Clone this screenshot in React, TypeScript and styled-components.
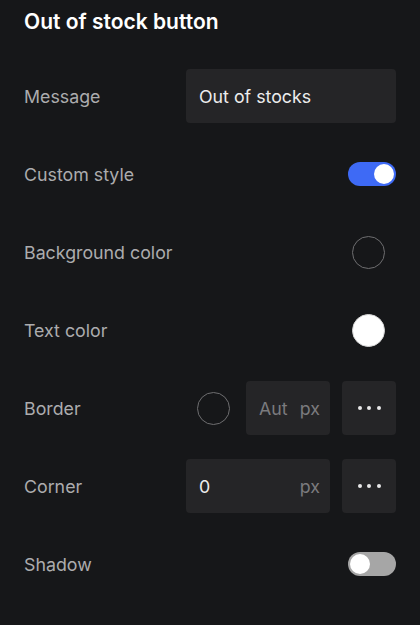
import React from "react";
import styled, { createGlobalStyle } from "styled-components";

const Global = createGlobalStyle`
  html, body { margin: 0; padding: 0; background: #161719; }
  body { font-family: Inter, "Noto Sans", sans-serif; -webkit-font-smoothing: antialiased; }
`;

const Panel = styled.div`
  width: 420px;
  min-height: 625px;
  box-sizing: border-box;
  background: #161719;
  padding: 10px 24px 0;
  display: flex;
  flex-direction: column;
`;

const Title = styled.h2`
  margin: 0 0 35px;
  font-size: 21px;
  line-height: 24px;
  font-weight: 600;
  color: #ffffff;
`;

const Rows = styled.div`
  display: flex;
  flex-direction: column;
  gap: 24px;
`;

const Row = styled.div`
  display: flex;
  align-items: center;
  justify-content: space-between;
  height: 54px;
`;

const Label = styled.span`
  font-size: 17.8px;
  color: #acacae;
`;

const Controls = styled.div`
  display: flex;
  align-items: center;
  gap: 12px;
`;

const Field = styled.div<{ $w: number }>`
  width: ${(p) => p.$w}px;
  height: 54px;
  box-sizing: border-box;
  background: #252527;
  border-radius: 4px;
  display: flex;
  align-items: center;
  justify-content: space-between;
  padding: 0 10px 0 13px;
  font-size: 17.8px;
`;

const Value = styled.span<{ $muted?: boolean }>`
  color: ${(p) => (p.$muted ? "#7b7b7e" : "#ededed")};
`;

const Unit = styled.span`
  color: #7b7b7e;
`;

const DotsButton = styled.div`
  width: 54px;
  height: 54px;
  border-radius: 4px;
  background: #252527;
  display: flex;
  align-items: center;
  justify-content: center;
  gap: 5.5px;
`;

const Dot = styled.span`
  width: 4px;
  height: 4px;
  border-radius: 50%;
  background: #e8e8e8;
`;

const Swatch = styled.div<{ $color: string; $border: string; $mr: number }>`
  width: 33px;
  height: 33px;
  box-sizing: border-box;
  border-radius: 50%;
  background: ${(p) => p.$color};
  border: 1px solid ${(p) => p.$border};
  margin-right: ${(p) => p.$mr}px;
`;

const Toggle = styled.div<{ $on: boolean }>`
  width: 48px;
  height: 24px;
  box-sizing: border-box;
  border-radius: 12px;
  padding: 2px;
  background: ${(p) => (p.$on ? "#3e6af5" : "#a6a6a6")};
  display: flex;
  justify-content: ${(p) => (p.$on ? "flex-end" : "flex-start")};
`;

const Knob = styled.span`
  width: 20px;
  height: 20px;
  border-radius: 50%;
  background: #ffffff;
`;

const Dots = () => (
  <DotsButton>
    <Dot />
    <Dot />
    <Dot />
  </DotsButton>
);

export default function App() {
  return (
    <>
      <Global />
      <Panel>
        <Title>Out of stock button</Title>
        <Rows>
          <Row>
            <Label>Message</Label>
            <Field $w={210}>
              <Value>Out of stocks</Value>
            </Field>
          </Row>
          <Row>
            <Label>Custom style</Label>
            <Toggle $on>
              <Knob />
            </Toggle>
          </Row>
          <Row>
            <Label>Background color</Label>
            <Swatch $color="#161719" $border="#6e6e70" $mr={11} />
          </Row>
          <Row>
            <Label>Text color</Label>
            <Swatch $color="#ffffff" $border="#d8d8d8" $mr={11} />
          </Row>
          <Row>
            <Label>Border</Label>
            <Controls>
              <Swatch $color="#161719" $border="#6e6e70" $mr={4} />
              <Field $w={84}>
                <Value $muted>Aut</Value>
                <Unit>px</Unit>
              </Field>
              <Dots />
            </Controls>
          </Row>
          <Row>
            <Label>Corner</Label>
            <Controls>
              <Field $w={144}>
                <Value>0</Value>
                <Unit>px</Unit>
              </Field>
              <Dots />
            </Controls>
          </Row>
          <Row>
            <Label>Shadow</Label>
            <Toggle $on={false}>
              <Knob />
            </Toggle>
          </Row>
        </Rows>
      </Panel>
    </>
  );
}
